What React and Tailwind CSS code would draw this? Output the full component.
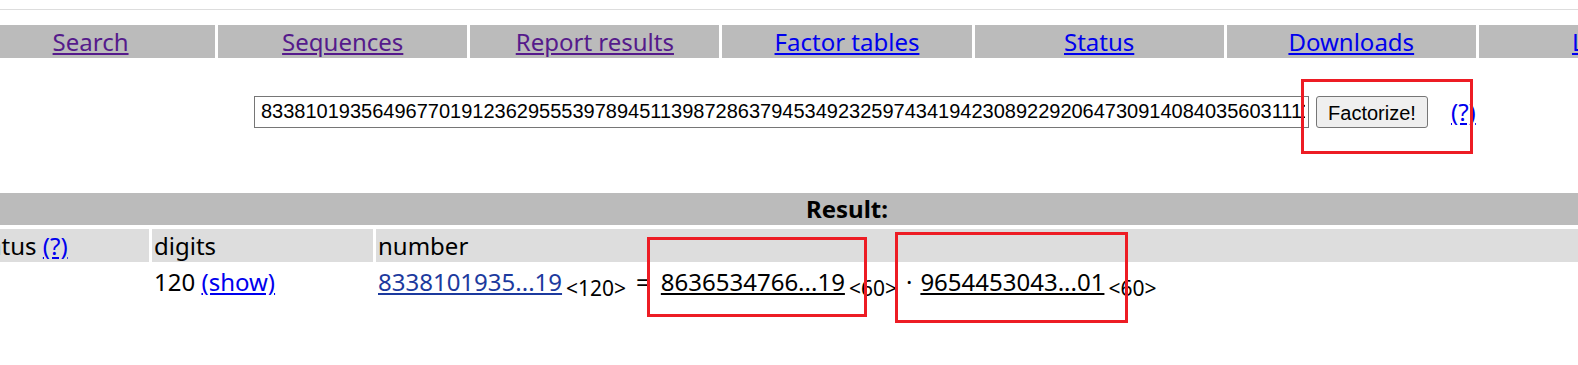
import React from 'react';

const navItems = [
    { label: 'Search', visited: true },
    { label: 'Sequences', visited: true },
    { label: 'Report results', visited: true },
    { label: 'Factor tables', visited: false },
    { label: 'Status', visited: false },
    { label: 'Downloads', visited: false },
    { label: 'Login', visited: false },
];

const number =
    '833810193564967701912362955539789451139872863794534923259743419423089229206473091408403560311118273604918273645091827319';

function Digits({ children }) {
    return <span className="relative top-[5px] ml-[4px] text-[21px]">{children}</span>;
}

export default function App() {
    return (
        <div className="relative w-[1578px] h-[365px] overflow-hidden bg-white text-black font-['Noto_Sans',sans-serif] text-[24px] leading-[33px]">
            {/* page is scrolled ~34px to the right */}
            <div className="ml-[-34px] w-[1762px]">
                <div className="pt-[9px]">
                    <div className="h-px bg-[#dddddd]" />
                </div>

                {/* Nav */}
                <div className="mt-[15px] grid grid-cols-7 gap-[3px]">
                    {navItems.map((item) => (
                        <div key={item.label} className="h-[33px] bg-[#bbbbbb] text-center">
                            <a
                                href="#"
                                className={item.visited ? 'underline text-[#551a8b]' : 'underline text-[#0000ee]'}
                            >
                                {item.label}
                            </a>
                        </div>
                    ))}
                </div>

                {/* Factorize form */}
                <div className="mt-[37px] flex items-center pl-[288px]">
                    <input
                        type="text"
                        readOnly
                        value={number}
                        className="w-[1055px] h-[32px] border border-[#767676] pl-[6px] pr-[3px] text-[20px] font-['Liberation_Sans',Arial,sans-serif] text-black outline-none"
                    />
                    <button className="ml-[7px] w-[112px] h-[32px] rounded-[3px] border border-[#767676] bg-[#efefef] text-[20px] font-['Liberation_Sans',Arial,sans-serif] text-black">
                        Factorize!
                    </button>
                    <a href="#" className="ml-[23px] text-[#0000ee] underline">(?)</a>
                </div>

                {/* Result table */}
                <div className="mt-[65px]">
                    <div className="h-[32px] leading-[32px] bg-[#bbbbbb] text-center font-bold">Result:</div>
                    <div className="mt-[4px] grid grid-cols-[183px_221px_1fr] gap-[3px]">
                        <div className="h-[33px] bg-[#dddddd] px-[2px]">
                            status <a href="#" className="text-[#0000ee] underline">(?)</a>
                        </div>
                        <div className="h-[33px] bg-[#dddddd] px-[2px]">digits</div>
                        <div className="h-[33px] bg-[#dddddd] px-[2px]">number</div>
                    </div>
                    <div className="mt-[3px] grid grid-cols-[183px_221px_1fr] gap-[3px]">
                        <div className="h-[33px] px-[2px]" />
                        <div className="h-[33px] px-[2px] whitespace-nowrap">
                            120 <a href="#" className="text-[#0000ee] underline">(show)</a>
                        </div>
                        <div className="h-[33px] px-[2px] whitespace-nowrap">
                            <a href="#" className="text-[#1c3a9e] underline">8338101935...19</a>
                            <Digits>&lt;120&gt;</Digits>
                            <span className="ml-[10px]">=</span>
                            <a href="#" className="ml-[11px] text-black underline">8636534766...19</a>
                            <Digits>&lt;60&gt;</Digits>
                            <span className="ml-[9px]">·</span>
                            <a href="#" className="ml-[8px] text-black underline">9654453043...01</a>
                            <Digits>&lt;60&gt;</Digits>
                        </div>
                    </div>
                </div>
            </div>

            {/* annotation boxes */}
            <div className="absolute left-[1301px] top-[79px] w-[172px] h-[75px] border-[3px] border-[#ed1c24]" />
            <div className="absolute left-[647px] top-[237px] w-[220px] h-[80px] border-[3px] border-[#ed1c24]" />
            <div className="absolute left-[895px] top-[232px] w-[233px] h-[91px] border-[3px] border-[#ed1c24]" />
        </div>
    );
}
